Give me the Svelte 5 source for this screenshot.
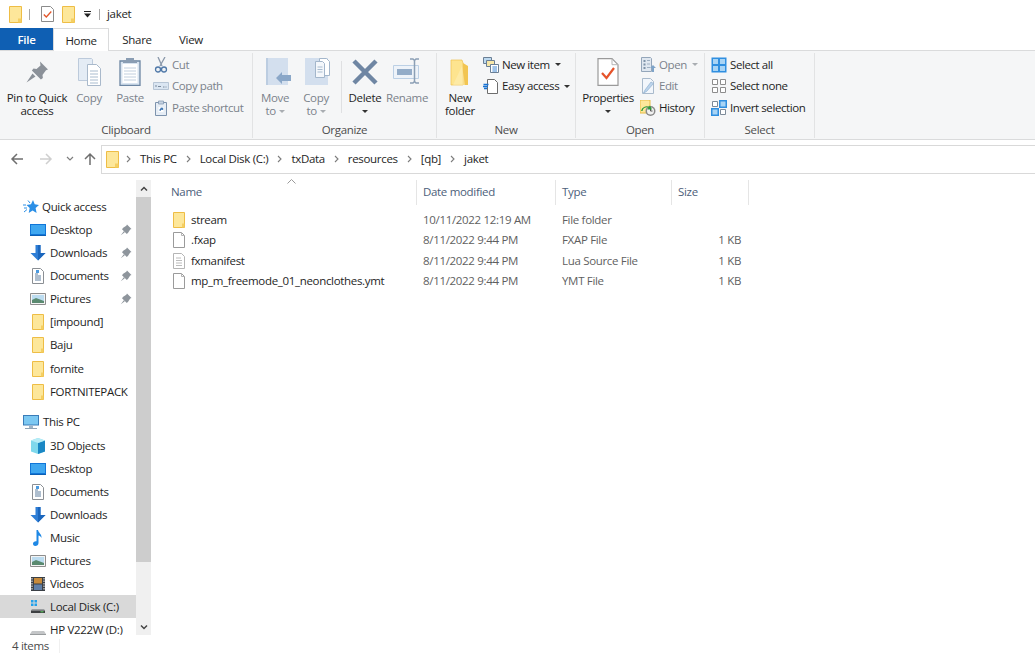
<script>
  const qa = [
    { n: 'Desktop', i: 'desktop', pin: true },
    { n: 'Downloads', i: 'down', pin: true },
    { n: 'Documents', i: 'docs', pin: true },
    { n: 'Pictures', i: 'pics', pin: true },
    { n: '[impound]', i: 'folder' },
    { n: 'Baju', i: 'folder' },
    { n: 'fornite', i: 'folder' },
    { n: 'FORTNITEPACK', i: 'folder' }
  ];
  const pc = [
    { n: '3D Objects', i: 'cube' },
    { n: 'Desktop', i: 'desktop' },
    { n: 'Documents', i: 'docs' },
    { n: 'Downloads', i: 'down' },
    { n: 'Music', i: 'music' },
    { n: 'Pictures', i: 'pics' },
    { n: 'Videos', i: 'film' },
    { n: 'Local Disk (C:)', i: 'disk', sel: true },
    { n: 'HP V222W (D:)', i: 'usb' }
  ];
  const crumbs = ['This PC', 'Local Disk (C:)', 'txData', 'resources', '[qb]', 'jaket'];
  const files = [
    { n: 'stream', i: 'folder', d: '10/11/2022 12:19 AM', t: 'File folder', s: '' },
    { n: '.fxap', i: 'file', d: '8/11/2022 9:44 PM', t: 'FXAP File', s: '1 KB' },
    { n: 'fxmanifest', i: 'lua', d: '8/11/2022 9:44 PM', t: 'Lua Source File', s: '1 KB' },
    { n: 'mp_m_freemode_01_neonclothes.ymt', i: 'file', d: '8/11/2022 9:44 PM', t: 'YMT File', s: '1 KB' }
  ];
</script>

{#snippet ic(name)}
  {#if name === 'folder'}
    <svg class="i16" viewBox="0 0 16 16"><path d="M2.500.5h11v15h-11z" fill="#fde79a" stroke="#eebd45"/><path d="M11 11.500h2.500v4H11z" fill="#f5cf63" stroke="none"/></svg>
  {:else if name === 'file'}
    <svg class="i16" viewBox="0 0 16 16"><path d="M2.500.5h8l3 3v12h-11z" fill="#fff" stroke="#9b9b9b"/><path d="M10.500.5v3h3" fill="none" stroke="#b5b5b5"/></svg>
  {:else if name === 'lua'}
    <svg class="i16" viewBox="0 0 16 16"><path d="M2.500.5h8l3 3v12h-11z" fill="#fff" stroke="#b5b5b5"/><path d="M5 5h5M5 7.500h6M5 10h6M5 12.500h6" stroke="#bcbcbc"/></svg>
  {:else if name === 'desktop'}
    <svg class="i16" viewBox="0 0 16 16"><path d="M0 2h16v11H0z" fill="#1176d8"/><path d="M1 3h14v9H1z" fill="#3fa7f0"/><path d="M0 13h16v1H0z" fill="#0c5fb3"/></svg>
  {:else if name === 'down'}
    <svg class="i16" viewBox="0 0 16 16"><path d="M5.500 0h5v8h5L8 15.500.5 8h5z" fill="#2e7ed6"/><path d="M8 0h2.500v8h5L8 15.500z" fill="#1b66bd"/></svg>
  {:else if name === 'docs'}
    <svg class="i16" viewBox="0 0 16 16"><path d="M2.500.5h8l3 3v12h-11z" fill="#fff" stroke="#8b8f94"/><path d="M5 6h3M5 8h6M5 10h6M5 12h6" stroke="#5f7f9f"/><path d="M6 2h3v3H6z" fill="#4a9ae0"/></svg>
  {:else if name === 'pics'}
    <svg class="i16" viewBox="0 0 16 16"><path d="M.5 2.500h15v11H.5z" fill="#f4f4f4" stroke="#8d8d8d"/><path d="M2 4h12v8H2z" fill="#bcdcf0"/><path d="M2 12V9l4-2 8 3v2z" fill="#5a8a70"/></svg>
  {:else if name === 'cube'}
    <svg class="i16" viewBox="0 0 16 16"><path d="M8 0l7 2.500v11L8 16l-7-2.500v-11z" fill="#7fd8ec"/><path d="M8 5l7-2.500v11L8 16z" fill="#1a87c4"/><path d="M8 0l7 2.500L8 5 1 2.500z" fill="#b7ecf6"/></svg>
  {:else if name === 'music'}
    <svg class="i16" viewBox="0 0 16 16"><path d="M6.500 0H8c.5 3 4 4 3.500 8-.7-1.500-1.800-2.300-3-2.500V13c0 1.700-1.500 3-3.200 3S3 15 3 13.600s1.600-2.600 3.500-2.300z" fill="#1e88e5"/></svg>
  {:else if name === 'film'}
    <svg class="i16" viewBox="0 0 16 16"><path d="M1 1h14v14H1z" fill="#3a3f45"/><path d="M4 2h8v5.500H4z" fill="#c78a3a"/><path d="M4 8.500h8V14H4z" fill="#5f7fa8"/><path d="M2 2v12M14 2v12" stroke="#d6d6d6" stroke-width="1.200" stroke-dasharray="1.500 1"/></svg>
  {:else if name === 'disk'}
    <svg class="i16" viewBox="0 0 16 16"><path d="M1 1h2.500v2.500H1zM4.500 1H7v2.500H4.500zM1 4.500h2.500V7H1zM4.500 4.500H7V7H4.500z" fill="#22a0ea"/><path d="M2 10h12l1 1.500H1z" fill="#9b9ea1"/><path d="M1 11.500h14V14H1z" fill="#3d3f42"/><path d="M10.500 12.300h3v1h-3z" fill="#5fd35f"/></svg>
  {:else if name === 'usb'}
    <svg class="i16" viewBox="0 0 16 16"><path d="M2 9h12l2 3v3H0v-3z" fill="#c4c6c8"/><path d="M0 12.500h16V15H0z" fill="#6f7275"/></svg>
  {/if}
{/snippet}

{#snippet pin()}
  <svg class="pin" viewBox="0 0 12 12"><path d="M7 .5l4.500 4.500-1.300.6-2.100 3.100L6.800 9.900 2 5.200l1.200-1.400 3.100-2zM3.800 7.200L.8 11.200l4-3z" fill="#8e959c"/></svg>
{/snippet}

{#snippet sm(name, label, kind = '', caret = false, capGrey = false)}
  <div class="sm" class:dis={kind === 'dis'}>
    <span class="smi">
      {#if name === 'cut'}
        <svg viewBox="0 0 16 16"><path d="M5 0l4 9M12 0L7 9" stroke="#8a98aa" stroke-width="1.300" fill="none"/><circle cx="5" cy="12.500" r="2.500" fill="#eef2f6" stroke="#4f78a8" stroke-width="1.300"/><circle cx="11" cy="12.500" r="2.500" fill="#eef2f6" stroke="#4f78a8" stroke-width="1.300"/></svg>
      {:else if name === 'path'}
        <svg viewBox="0 0 16 16"><path d="M.5 4.500h15v7H.5z" fill="#dbe6f2" stroke="#b7c5d5"/><path d="M3 7v2M5 8l1 1 1-1 1 1M10 9h1.500M12.500 9h1" stroke="#7a8a9c" fill="none"/></svg>
      {:else if name === 'short'}
        <svg viewBox="0 0 16 16"><path d="M2.500 2.500h11v13h-11z" fill="#e6edf5" stroke="#7d93ad"/><path d="M5.500 1h5v3h-5z" fill="#c6d3e2" stroke="#7d93ad" stroke-width=".7"/><path d="M5.500 7h5v5h-5z" fill="#fff"/><path d="M7 11V9h2M7.700 8h2v2z" stroke="#3a72b0" fill="#3a72b0" stroke-width=".8"/></svg>
      {:else if name === 'newitem'}
        <svg viewBox="0 0 16 16"><path d="M.5.500h8v6h-8z" fill="#bcd9f0" stroke="#6a7f95"/><path d="M3.500 3.500h8v6h-8z" fill="#f7e7a8" stroke="#6a7f95"/><path d="M7.500 7.500h8v8h-8z" fill="#fff" stroke="#6a7f95"/><path d="M9 10h5M9 12h5M9 14h5M11 9v6M13 9v6" stroke="#5a9ad8" stroke-width=".7"/></svg>
      {:else if name === 'easy'}
        <svg viewBox="0 0 16 16"><path d="M4.500 1.500h7l3 3v11h-10z" fill="#fff" stroke="#6d6d6d"/><path d="M.5 6.500h5M0 8.500h5M1 10.500h3" stroke="#1873d3" stroke-width="1.300"/></svg>
      {:else if name === 'open'}
        <svg viewBox="0 0 16 16"><path d="M1.500.5h9l1 1v13h-10z" fill="#dfe7f0" stroke="#94a6ba"/><path d="M3.500 3h2v2h-2zM3.500 6.500h2v2h-2zM3.500 10h2v2h-2z" fill="#7f93a8"/><path d="M7 3.500h3M7 7h3M7 10.500h3" stroke="#9fb0c2"/><path d="M12 15v-4h-2l3-3 3 3h-2v4z" fill="#7ea4c9"/></svg>
      {:else if name === 'edit'}
        <svg viewBox="0 0 16 16"><path d="M2.500.5h8l3 3v12h-11z" fill="#f2f6fb" stroke="#a9bacc"/><path d="M11 4L5 12l-1.500 3 3-1.500 7-8z" fill="#bcd4ec" stroke="#8fb0d0" stroke-width=".7"/></svg>
      {:else if name === 'history'}
        <svg viewBox="0 0 16 16"><path d="M0 0h10v13H0z" fill="#fde79a" stroke="#e8bb45"/><circle cx="10.500" cy="11" r="5" fill="#8a8a8a"/><circle cx="10.500" cy="11" r="3.500" fill="#f1f1f1"/><path d="M10.500 8.500V11h2" stroke="#555" fill="none"/><path d="M2.500 11a4.500 4.500 0 0 1 6-3.500l-1 2H12L10 5.500 9 6.800A6 6 0 0 0 1 11z" fill="#2d9b3a"/></svg>
      {:else if name === 'all'}
        <svg viewBox="0 0 16 16"><path d="M.5.500h15v15H.5z" fill="#2f8fe0"/><path d="M2 2h5v5H2zM9 2h5v5H9zM2 9h5v5H2zM9 9h5v5H9z" fill="#a8d4f5"/></svg>
      {:else if name === 'none'}
        <svg viewBox="0 0 16 16"><path d="M1.500 1.500h5v5h-5zM9.500 1.500h5v5h-5zM1.500 9.500h5v5h-5zM9.500 9.500h5v5h-5z" fill="#fff" stroke="#8d8d8d"/></svg>
      {:else if name === 'invert'}
        <svg viewBox="0 0 16 16"><path d="M8 0h8v8H8zM0 8h8v8H0z" fill="#2f8fe0"/><path d="M9.500 1.500h5v5h-5zM1.500 9.500h5v5h-5z" fill="#a8d4f5"/><path d="M1.500 1.500h5v5h-5zM9.500 9.500h5v5h-5z" fill="#fff" stroke="#7d8b99"/></svg>
      {/if}
    </span>
    <span>{label}</span>
    {#if caret}<i class="caret" class:grey={capGrey}></i>{/if}
  </div>
{/snippet}

<div class="win">
  <div class="title">
    <svg class="q f1" viewBox="0 0 13 17"><path d="M.5.500h12v16H.500z" fill="#fde79a" stroke="#eebd45"/><path d="M9 12.500h3.500v4H9z" fill="#f5cf63"/></svg>
    <span class="tsep"></span>
    <svg class="q f2" viewBox="0 0 13 16"><path d="M.5.500h9l3 3v12H.5z" fill="#fff" stroke="#8b8b8b"/><path d="M2.800 8.500l2.500 2.500 5-5.500" fill="none" stroke="#e2562a" stroke-width="1.300"/></svg>
    <svg class="q f3" viewBox="0 0 13 17"><path d="M.5.500h12v16H.500z" fill="#fde79a" stroke="#eebd45"/><path d="M9 12.500h3.500v4H9z" fill="#f5cf63"/></svg>
    <svg class="qd" viewBox="0 0 7 7"><path d="M0 0h7v1H0zM0 2.500h7L3.500 6.500z" fill="#222"/></svg>
    <span class="tsep t2"></span>
    <span class="ttext">jaket</span>
  </div>

  <div class="tabs">
    <div class="tab file">File</div>
    <div class="tab home">Home</div>
    <div class="tab share">Share</div>
    <div class="tab view">View</div>
  </div>

  <div class="ribbon">
    <div class="grp g1">
      <div class="gb">
        <div class="lg w-pin">
          <svg class="li" viewBox="-2 -2 28 28"><path d="M15 1.500l8 8-2 .8-3.500 4.700.4 3-2 1.500-9-9L8.500 8.500l3 .4 4-3.500zM7.500 13.500L1.500 22.500l9-6z" fill="#8b9199"/></svg>
          <span>Pin to Quick<br />access</span>
        </div>
        <div class="lg dis w-copy">
          <svg class="li" viewBox="0 0 24 28"><path d="M1.500 .5h13l1 1v21h-14z" fill="#e4ecf5" stroke="#bccadb"/><path d="M10.500 6.500h9l4 4v17h-13z" fill="#fff" stroke="#a9b9cb"/><path d="M13 13h8M13 16h8M13 19h8M13 22h8M13 25h8" stroke="#a9bccf"/></svg>
          <span>Copy</span>
        </div>
        <div class="lg dis w-paste">
          <svg class="li" viewBox="0 0 24 28"><path d="M2 3h20v24.500H2z" fill="#d9e4f0" stroke="#6c86a3" stroke-width="1.300"/><path d="M4.500 6h15v19h-15z" fill="#fff"/><path d="M8 0h8v2h3v3H5V2h3z" fill="#8a9db3"/><path d="M6 10h12M6 13h12M6 16h12M6 19h12M6 22h12" stroke="#c2cfde"/></svg>
          <span>Paste</span>
        </div>
        <div class="col c-clip">
          {@render sm('cut', 'Cut', 'dis')}
          {@render sm('path', 'Copy path', 'dis')}
          {@render sm('short', 'Paste shortcut', 'dis')}
        </div>
      </div>
      <div class="gl">Clipboard</div>
    </div>

    <div class="grp g2">
      <div class="gb">
        <div class="lg dis w-move">
          <svg class="li" viewBox="0 0 26 28"><path d="M0 0h22v27H0z" fill="#d3dfee"/><path d="M0 0h2v27H0z" fill="#bccde1"/><path d="M10 20l6-6v3h9v6h-9v3z" fill="#8aa7c8"/></svg>
          <span>Move<br />to <i class="caret grey"></i></span>
        </div>
        <div class="lg dis w-cto">
          <svg class="li" viewBox="0 0 26 28"><path d="M0 0h23v27H0z" fill="#d3dfee"/><path d="M14.500 .5h7l3 3v14h-10z" fill="#fff" stroke="#a3b6cb"/><path d="M10.500 3.500h7l2 2v14h-9z" fill="#f4f7fb" stroke="#a3b6cb"/><path d="M12.500 9h5M12.500 11.500h5M12.500 14h5" stroke="#a9bccf"/></svg>
          <span>Copy<br />to <i class="caret grey"></i></span>
        </div>
        <span class="vsep"></span>
        <div class="lg w-del">
          <svg class="li" viewBox="-1 -1 28 28"><path d="M2 2l22 22M24 2L2 24" stroke="#6f86a3" stroke-width="4.500"/></svg>
          <span>Delete<br /><i class="caret"></i></span>
        </div>
        <div class="lg dis w-ren">
          <svg class="li" viewBox="0 0 28 28"><path d="M.5 7.500h25v13H.5z" fill="#eef3f9" stroke="#bcd0e5"/><path d="M4 11h15v6H4z" fill="#93acc8"/><path d="M17 1h3l1.500 1.500L23 1h3M17 25h3l1.500-1.500L23 25h3M21.500 2.500v21" fill="none" stroke="#8b9fb5" stroke-width="1.500"/></svg>
          <span>Rename</span>
        </div>
      </div>
      <div class="gl">Organize</div>
    </div>

    <div class="grp g3">
      <div class="gb">
        <div class="lg w-nf">
          <svg class="li" viewBox="0 -1 20 28"><path d="M1 1h11l1 3v22H1z" fill="#fde48f" stroke="#efc24f" stroke-width=".7"/><path d="M13 4l5 3v19h-5z" fill="#f2c552"/><path d="M12 7l3 19H3z" fill="#fdeeb8" opacity=".55"/></svg>
          <span>New<br />folder</span>
        </div>
        <div class="col c-new">
          {@render sm('newitem', 'New item', '', true)}
          {@render sm('easy', 'Easy access', '', true)}
        </div>
      </div>
      <div class="gl">New</div>
    </div>

    <div class="grp g4">
      <div class="gb">
        <div class="lg w-prop">
          <svg class="li" viewBox="0 0 22 28"><path d="M1 .7h14l6 6v20.600H1z" fill="#fff" stroke="#9a9a9a" stroke-width="1.200"/><path d="M15 .7v6h6" fill="none" stroke="#b5b5b5"/><path d="M5 15l4.500 5L17 10" fill="none" stroke="#e6532a" stroke-width="2.200"/></svg>
          <span>Properties<br /><i class="caret"></i></span>
        </div>
        <div class="col c-open">
          {@render sm('open', 'Open', 'dis', true, true)}
          {@render sm('edit', 'Edit', 'dis')}
          {@render sm('history', 'History')}
        </div>
      </div>
      <div class="gl">Open</div>
    </div>

    <div class="grp g5">
      <div class="gb">
        <div class="col c-sel">
          {@render sm('all', 'Select all')}
          {@render sm('none', 'Select none')}
          {@render sm('invert', 'Invert selection')}
        </div>
      </div>
      <div class="gl">Select</div>
    </div>
  </div>

  <div class="addr">
    <div class="navs">
      <svg class="n1" viewBox="0 0 14 14"><path d="M13 7H2M7 2L2 7l5 5" fill="none" stroke="#6f6f6f" stroke-width="1.500"/></svg>
      <svg class="n2" viewBox="0 0 14 14"><path d="M1 7h11M7 2l5 5-5 5" fill="none" stroke="#cfcfcf" stroke-width="1.500"/></svg>
      <svg class="n3" viewBox="0 0 8 6"><path d="M1 1l3 3 3-3" fill="none" stroke="#7d7d7d" stroke-width="1.200"/></svg>
      <svg class="n4" viewBox="0 0 14 14"><path d="M7 13V2M2 7l5-5 5 5" fill="none" stroke="#6f6f6f" stroke-width="1.500"/></svg>
    </div>
    <div class="bar">
      <svg class="af" viewBox="0 0 13 17"><path d="M.5.500h12v16H.500z" fill="#fde79a" stroke="#eebd45"/><path d="M9 12.500h3.500v4H9z" fill="#f5cf63"/></svg>
      {#each crumbs as c}
        <svg class="chev" viewBox="0 0 5 8"><path d="M1 1l3 3-3 3" fill="none" stroke="#7c7c7c" stroke-width="1.100"/></svg>
        <span class="crumb">{c}</span>
      {/each}
    </div>
  </div>

  <div class="body">
    <div class="side">
      <div class="tree">
        <div class="row top qa"><svg class="i16" viewBox="0 0 16 16"><path d="M10 1l1.700 4.300L16 6l-3.400 3 1 5-4-2.500L5.700 14l1-5L3.500 6l4.500-.7z" fill="#2b8fe6"/><path d="M0 6h3M1 9h3M1 13l3-2.500M5 1.500L7 4" stroke="#2b8fe6"/></svg><span>Quick access</span></div>
        {#each qa as r}
          <div class="row kid">{@render ic(r.i)}<span class="nm">{r.n}</span>{#if r.pin}{@render pin()}{/if}</div>
        {/each}
        <div class="row top pc"><svg class="i16" viewBox="0 0 16 16"><path d="M0 1h16v10.500H0z" fill="#3a7cb8"/><path d="M1 2h14v8.500H1z" fill="#7cc8f2"/><path d="M6 11.500h4V14H6z" fill="#9fb5c8"/><path d="M2 14h12v1H2z" fill="#8fa3b5"/></svg><span>This PC</span></div>
        {#each pc as r}
          <div class="row kid pcr" class:sel={r.sel}>{@render ic(r.i)}<span class="nm">{r.n}</span></div>
        {/each}
      </div>
      <div class="sb">
        <svg class="ar" viewBox="0 0 8 6"><path d="M1 4.500l3-3 3 3" fill="none" stroke="#444" stroke-width="1.500"/></svg>
        <div class="thumb"></div>
        <div class="sp"></div>
        <svg class="ar" viewBox="0 0 8 6"><path d="M1 1.500l3 3 3-3" fill="none" stroke="#444" stroke-width="1.500"/></svg>
      </div>
    </div>

    <div class="main">
      <svg class="sort" viewBox="0 0 9 5"><path d="M.5 4.500l4-4 4 4" fill="none" stroke="#9a9a9a"/></svg>
      <div class="head">
        <div class="hc c1">Name</div>
        <div class="hc c2">Date modified</div>
        <div class="hc c3">Type</div>
        <div class="hc c4">Size</div>
      </div>
      <div class="rows">
        {#each files as f}
          <div class="frow">
            <div class="c1 nc">{@render ic(f.i)}<span>{f.n}</span></div>
            <div class="c2 mut">{f.d}</div>
            <div class="c3 mut">{f.t}</div>
            <div class="c4 mut size">{f.s}</div>
          </div>
        {/each}
      </div>
    </div>
  </div>

  <div class="status"><span>4 items</span><i></i></div>
</div>

<style>
  :global(body) { margin: 0; background: #fff; }
  .win { width: 1035px; height: 657px; overflow: hidden; display: flex; flex-direction: column; font: 11.500px/16px "Open Sans", "Noto Sans", sans-serif; color: #1e1e1e; letter-spacing: -0.32px; background: #fff; }
  svg { display: block; flex: none; }

  .title { height: 28px; display: flex; align-items: center; padding-left: 9px; box-sizing: border-box; }
  .q { width: 13px; height: 17px; }
  .f2 { margin-left: 11px; height: 16px; }
  .f3 { margin-left: 8px; }
  .qd { width: 7px; height: 7px; margin-left: 9px; }
  .tsep { width: 1px; height: 11px; background: #a8a8a8; margin-left: 7px; }
  .t2 { margin-left: 8px; }
  .ttext { margin-left: 7px; }

  .tabs { height: 22px; display: flex; position: relative; flex: none; border-bottom: 1px solid #dadbdc; }
  .tab { height: 22px; box-sizing: border-box; line-height: 23px; text-align: center; }
  .file { width: 53px; background: #0f5fb3; color: #fff; font-weight: 600; }
  .home { width: 56px; background: #fff; border: 1px solid #dadbdc; border-bottom: 0; height: 23px; position: relative; z-index: 1; }
  .share { width: 56px; }
  .view { width: 52px; }

  .ribbon { height: 88px; flex: none; background: #f5f6f7; display: flex; border-bottom: 1px solid #dadbdc; box-sizing: content-box; }
  .grp { display: flex; flex-direction: column; border-right: 1px solid #e2e3e4; box-sizing: border-box; margin-top: 2px; height: 85px; }
  .g1 { width: 253px; }
  .g2 { width: 184px; }
  .g3 { width: 139px; }
  .g4 { width: 129px; }
  .g5 { width: 110px; }
  .gb { height: 69px; display: flex; flex: none; }
  .gl { text-align: center; color: #4d4d4d; line-height: 16px; }
  .lg { display: flex; flex-direction: column; align-items: center; text-align: center; flex: none; line-height: 13px; box-sizing: border-box; }
  .lg .li { height: 28px; margin-top: 5px; margin-bottom: 5px; width: auto; }
  .dis { color: #7b828b; }
  .w-pin { width: 74px; }
  .w-copy { width: 30px; }
  .w-paste { width: 36px; margin-left: 8px; }
  .c-clip { margin-left: 5px; }
  .w-move { width: 34px; margin-left: 5px; }
  .lg.w-move .li { margin-left: 7px; }
  .w-cto { width: 34px; margin-left: 7px; }
  .lg.w-cto .li { margin-left: 4px; }
  .vsep { width: 1px; height: 52px; margin: 8px 0 0 8px; background: #dfe0e2; flex: none; }
  .w-del { width: 40px; margin-left: 3px; }
  .w-ren { width: 42px; margin-left: 1px; }
  .w-nf { width: 40px; margin-left: 3px; }
  .c-new { margin-left: 3px; }
  .w-prop { width: 58px; margin-left: 3px; letter-spacing: -0.42px; }
  .c-open { margin-left: 3px; }
  .c-sel { margin-left: 6px; }
  .col { display: flex; flex-direction: column; padding-top: 1px; }
  .sm { height: 21.500px; display: flex; align-items: center; white-space: nowrap; letter-spacing: -0.42px; }
  .smi { width: 16px; height: 16px; margin-right: 3px; flex: none; }
  .smi svg { width: 16px; height: 16px; }
  .caret { display: inline-block; width: 0; height: 0; border: 3px solid transparent; border-top: 3px solid #333; border-bottom: 0; margin-left: 5px; vertical-align: middle; }
  .caret.grey { border-top-color: #a9adb2; }
  .lg br + .caret { margin-left: 0; }

  .addr { height: 38px; flex: none; display: flex; align-items: center; box-sizing: border-box; }
  .navs { width: 101px; flex: none; display: flex; align-items: center; }
  .n1, .n2, .n4 { width: 14px; height: 14px; }
  .n1 { margin-left: 10px; }
  .n2 { margin-left: 15px; }
  .n3 { width: 8px; height: 6px; margin-left: 13px; }
  .n4 { margin-left: 9px; }
  .bar { flex: 1; height: 29px; border: 1px solid #d9d9d9; border-right: 0; display: flex; align-items: center; box-sizing: border-box; padding-left: 4px; }
  .af { width: 13px; height: 17px; margin-right: 7px; }
  .chev { width: 5px; height: 8px; margin-right: 9px; }
  .crumb { margin-right: 9px; }

  .body { flex: 1; min-height: 0; display: flex; }
  .side { width: 151px; flex: none; display: flex; height: 100%; }
  .tree { width: 136px; flex: none; padding-top: 17px; box-sizing: border-box; overflow: hidden; }
  .row { height: 23.150px; display: flex; align-items: center; white-space: nowrap; }
  .top { padding-left: 23px; }
  .top svg { margin-right: 4px; }
  .qa svg { margin-right: 3px; }
  .kid { padding-left: 30px; position: relative; }
  .kid > .i16 { margin-right: 4px; }
  .pc { margin-top: 7px; height: 24px; }
  .pcr { height: 23px; }
  .sel { background: #d9d9d9; }
  .nm { flex: 1; }
  .i16 { width: 16px; height: 16px; }
  .pin { width: 12px; height: 12px; margin-right: 4px; flex: none; }
  .sb { width: 15px; flex: none; background: #f0f0f0; display: flex; flex-direction: column; align-items: center; margin-top: 2px; }
  .ar { width: 8px; height: 6px; margin: 6px 0 5px; }
  .thumb { width: 100%; height: 365px; background: #cdcdcd; }
  .sp { flex: 1; }

  .main { flex: 1; position: relative; padding-left: 13px; }
  .sort { position: absolute; left: 136px; top: 1px; width: 9px; height: 5px; }
  .head { display: flex; height: 28px; margin-top: 0; padding-top: 2px; }
  .hc { height: 25px; line-height: 23px; padding-left: 7px; border-right: 1px solid #e5e5e5; box-sizing: border-box; color: #4c607a; }
  .hc.c2, .hc.c3, .hc.c4 { padding-left: 6px; }
  .c1 { width: 253px; flex: none; }
  .c2 { width: 139px; flex: none; }
  .c3 { width: 116px; flex: none; }
  .c4 { width: 77px; flex: none; }
  .rows { padding-top: 2px; }
  .frow { display: flex; height: 20.330px; align-items: center; }
  .nc { display: flex; align-items: center; padding-left: 7px; box-sizing: border-box; }
  .nc span { margin-left: 4px; }
  .mut { padding-left: 6px; box-sizing: border-box; color: #5f5f5f; }
  .size { text-align: right; padding-right: 8px; }

  .status { height: 22px; flex: none; display: flex; align-items: center; padding-left: 12px; color: #4a4a4a; }
  .status i { width: 1px; height: 14px; background: #f0f0f0; margin-left: 10px; }
</style>
